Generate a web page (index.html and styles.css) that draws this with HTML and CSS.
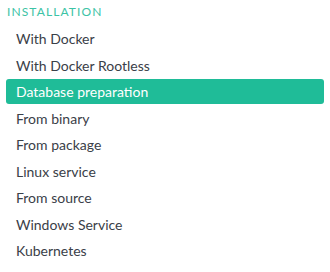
FILE: index.html
```html
<!DOCTYPE html>
<html lang="en">
<head>
    <meta charset="UTF-8">
    <title>Installation</title>
    <link rel="stylesheet" href="styles.css">
</head>
<body>
    <nav class="menu">
        <div class="menu-title">Installation</div>
        <ul class="menu-list">
            <li><a href="#">With Docker</a></li>
            <li><a href="#">With Docker Rootless</a></li>
            <li><a href="#" class="active">Database preparation</a></li>
            <li><a href="#">From binary</a></li>
            <li><a href="#">From package</a></li>
            <li><a href="#">Linux service</a></li>
            <li><a href="#">From source</a></li>
            <li><a href="#">Windows Service</a></li>
            <li><a href="#">Kubernetes</a></li>
        </ul>
    </nav>
</body>
</html>
```

FILE: styles.css
```css
body
{
    margin: 0;
    background-color: #ffffff;
    font-family: Lato, "Open Sans", sans-serif;
}

.menu
{
    padding: 4px 6px 0 6px;
    width: 318px;
}

.menu-title
{
    text-transform: uppercase;
    color: #3cc3a5;
    font-size: 12px;
    letter-spacing: 1.1px;
    line-height: 16px;
    padding-left: 1px;
    margin-bottom: 6px;
}

.menu-list
{
    list-style: none;
    margin: 0;
    padding: 0;
    display: flex;
    flex-direction: column;
    gap: 1.5px;
}

.menu-list a
{
    display: block;
    height: 25px;
    line-height: 25px;
    padding-left: 10px;
    font-size: 14px;
    color: #3a4048;
    text-decoration: none;
    border-radius: 3px;
}

.menu-list a.active
{
    background-color: #1fbc98;
    color: #ffffff;
}
```
